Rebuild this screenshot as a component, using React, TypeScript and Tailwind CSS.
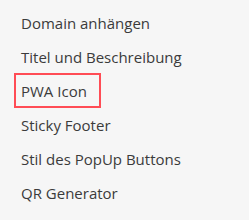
import React from "react";

const items = [
  "Domain anhängen",
  "Titel und Beschreibung",
  "PWA Icon",
  "Sticky Footer",
  "Stil des PopUp Buttons",
  "QR Generator",
];

export default function App() {
  return (
    <div
      className="w-[249px] h-[220px] bg-[#f6f6f6] pt-[6px] overflow-hidden"
      style={{ fontFamily: '"Open Sans", "Noto Sans", sans-serif' }}
    >
      <ul className="flex flex-col">
        {items.map((t, i) => (
          <li
            key={t}
            className="relative h-[34px] flex items-center pl-[21px] text-[15px] text-[#3b3b3b]"
          >
            {i === 2 && (
              <span className="absolute left-[14px] top-[-1px] w-[87px] h-[35px] border-2 border-[#ff4c55]" />
            )}
            <span className="relative">{t}</span>
          </li>
        ))}
      </ul>
    </div>
  );
}
